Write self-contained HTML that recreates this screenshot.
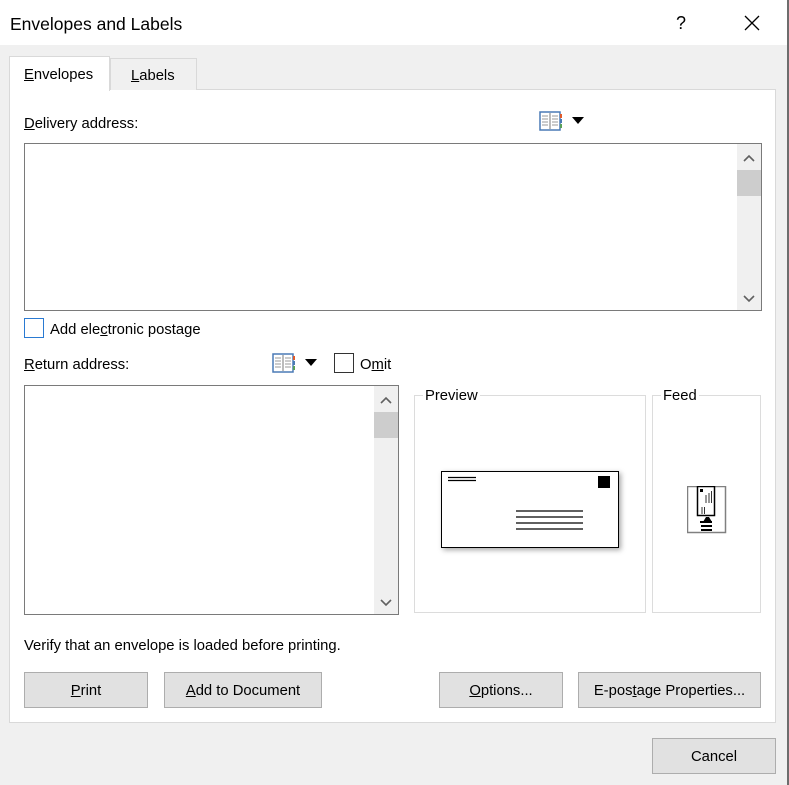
<!DOCTYPE html>
<html><head><style>
*{box-sizing:border-box;margin:0;padding:0}
body{width:789px;height:785px;background:#f0f0f0;font-family:"Liberation Sans",sans-serif;font-size:14.8px;color:#000;position:relative;overflow:hidden}
.a{position:absolute}
.title{left:0;top:0;width:787px;height:45px;background:#fff}
.btn{position:absolute;background:#e1e1e1;border:1px solid #adadad;text-align:center;line-height:36px;font-size:14.8px}
.ta{position:absolute;background:#fff;border:1px solid #7a7a7a}
.sb{position:absolute;top:0;right:0;width:24px;bottom:0;background:#f0f0f0}
.thumb{position:absolute;left:0;right:0;height:26px;top:26px;background:#cdcdcd}
.chev{position:absolute;left:6px;width:12px;height:10px}
.grp{position:absolute;border:1px solid #dcdcdc}
.grp span{position:absolute;top:-8px;left:8px;background:#fff;padding:0 2px;line-height:16px}
u{text-decoration:underline}
</style></head><body>
<div class="a" style="right:0;top:0;width:2px;height:785px;background:#6d6d6d"></div>
<div class="a title"></div>
<div class="a" style="left:10px;top:14px;font-size:17.5px">Envelopes and Labels</div>
<div class="a" style="left:676px;top:13px;font-size:18px">?</div>
<svg class="a" style="left:744px;top:15px" width="16" height="16"><path d="M1 1L15 15M15 1L1 15" stroke="#000" stroke-width="1.3"/></svg>

<div class="a" style="left:9px;top:89px;width:767px;height:634px;background:#fff;border:1px solid #d9d9d9"></div>
<div class="a" style="left:110px;top:58px;width:87px;height:32px;background:#f0f0f0;border:1px solid #d9d9d9;border-bottom:none"></div>
<div class="a" style="left:131px;top:68px"><u>L</u>abels</div>
<div class="a" style="left:9px;top:56px;width:101px;height:35px;background:#fff;border:1px solid #d9d9d9;border-bottom:none"></div>
<div class="a" style="left:24px;top:67px"><u>E</u>nvelopes</div>

<div class="a" style="left:24px;top:116px"><u>D</u>elivery address:</div>
<svg class="a" style="left:539px;top:111px" width="24" height="20"><rect x="1" y="1" width="20" height="18" fill="#fff" stroke="#4a7ab5" stroke-width="1.5"/><line x1="11" y1="2" x2="11" y2="18" stroke="#777"/><path d="M3 5h6M3 8h6M3 11h6M3 14h6M13 5h6M13 8h6M13 11h6M13 14h6" stroke="#999"/><path d="M22 3v4" stroke="#e05a2a" stroke-width="2"/><path d="M22 8v4" stroke="#4a7ab5" stroke-width="2"/><path d="M22 13v4" stroke="#5aa05a" stroke-width="2"/></svg>
<svg class="a" style="left:572px;top:117px" width="12" height="8"><path d="M0 0h12L6 7z"/></svg>

<div class="ta" style="left:24px;top:143px;width:738px;height:168px"><div class="sb"><svg class="chev" style="top:9px" viewBox="0 0 12 10"><path d="M1 8L6 3l5 5" fill="none" stroke="#606060" stroke-width="1.6"/></svg><div class="thumb"></div><svg class="chev" style="bottom:6px" viewBox="0 0 12 10"><path d="M1 2l5 5 5-5" fill="none" stroke="#606060" stroke-width="1.6"/></svg></div></div>

<div class="a" style="left:24px;top:318px;width:20px;height:20px;border:1px solid #2a7ad2;background:#fff"></div>
<div class="a" style="left:50px;top:322px">Add ele<u>c</u>tronic postage</div>

<div class="a" style="left:24px;top:357px"><u>R</u>eturn address:</div>
<svg class="a" style="left:272px;top:353px" width="24" height="20"><rect x="1" y="1" width="20" height="18" fill="#fff" stroke="#4a7ab5" stroke-width="1.5"/><line x1="11" y1="2" x2="11" y2="18" stroke="#777"/><path d="M3 5h6M3 8h6M3 11h6M3 14h6M13 5h6M13 8h6M13 11h6M13 14h6" stroke="#999"/><path d="M22 3v4" stroke="#e05a2a" stroke-width="2"/><path d="M22 8v4" stroke="#4a7ab5" stroke-width="2"/><path d="M22 13v4" stroke="#5aa05a" stroke-width="2"/></svg>
<svg class="a" style="left:305px;top:359px" width="12" height="8"><path d="M0 0h12L6 7z"/></svg>
<div class="a" style="left:334px;top:353px;width:20px;height:20px;border:1px solid #333;background:#fff"></div>
<div class="a" style="left:360px;top:357px">O<u>m</u>it</div>

<div class="ta" style="left:24px;top:385px;width:375px;height:230px"><div class="sb"><svg class="chev" style="top:9px" viewBox="0 0 12 10"><path d="M1 8L6 3l5 5" fill="none" stroke="#606060" stroke-width="1.6"/></svg><div class="thumb"></div><svg class="chev" style="bottom:6px" viewBox="0 0 12 10"><path d="M1 2l5 5 5-5" fill="none" stroke="#606060" stroke-width="1.6"/></svg></div></div>

<div class="grp" style="left:414px;top:395px;width:232px;height:218px"><span>Preview</span></div>
<div class="a" style="left:441px;top:471px;width:178px;height:77px;border:1.5px solid #000;background:#fff;box-shadow:2px 2px 5px rgba(0,0,0,.35)"></div>
<svg class="a" style="left:441px;top:471px" width="178" height="77"><path d="M7 6.5h28M7 9.5h28M75 40h67M75 46h67M75 52h67M75 58h67" stroke="#000" stroke-width="1.3"/><rect x="157" y="5" width="12" height="12"/></svg>

<div class="grp" style="left:652px;top:395px;width:109px;height:218px"><span>Feed</span></div>
<svg class="a" style="left:687px;top:486px" width="40" height="48"><rect x="0.5" y="0.5" width="38" height="46" fill="#fff" stroke="#808080" stroke-width="1.5"/><rect x="10.5" y="0.5" width="17" height="29" fill="#fff" stroke="#000" stroke-width="1.5"/><rect x="13" y="3" width="3" height="3"/><path d="M19 9v8M22 7v10M24.5 5v12M15 21v7M17.5 21v7" stroke="#333"/><path d="M16 36l3-5 3 0 3 5z M13 35h12v2H13z M14 39h11v2H14z M14 43h11v2H14z"/></svg>

<div class="a" style="left:24px;top:638px">Verify that an envelope is loaded before printing.</div>
<div class="btn" style="left:24px;top:672px;width:124px;height:36px"><u>P</u>rint</div>
<div class="btn" style="left:164px;top:672px;width:158px;height:36px"><u>A</u>dd to Document</div>
<div class="btn" style="left:439px;top:672px;width:124px;height:36px"><u>O</u>ptions...</div>
<div class="btn" style="left:578px;top:672px;width:183px;height:36px">E-pos<u>t</u>age Properties...</div>
<div class="btn" style="left:652px;top:738px;width:124px;height:36px">Cancel</div>
</body></html>
